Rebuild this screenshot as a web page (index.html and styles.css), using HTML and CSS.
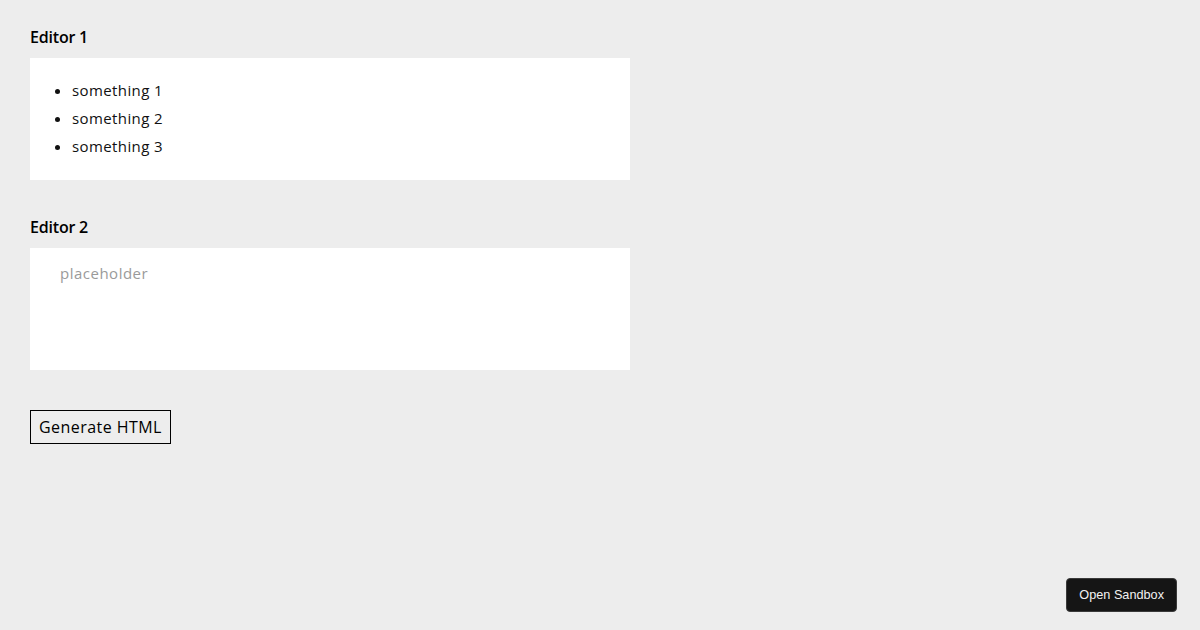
FILE: index.html
```html
<!DOCTYPE html>
<html>
<head>
<meta charset="utf-8">
<link rel="stylesheet" href="styles.css">
</head>
<body>
<div class="page">
  <h3 class="label">Editor 1</h3>
  <div class="editor">
    <ul class="list">
      <li>something 1</li>
      <li>something 2</li>
      <li>something 3</li>
    </ul>
  </div>
  <h3 class="label label-second">Editor 2</h3>
  <div class="editor editor-empty">
    <p class="placeholder">placeholder</p>
  </div>
  <button class="generate">Generate HTML</button>
</div>
<a class="sandbox">Open Sandbox</a>
</body>
</html>
```
FILE: styles.css
```css
html, body {
  margin: 0;
  background: #ededed;
}
body {
  font-family: "Open Sans", "DejaVu Sans", sans-serif;
  color: #111;
}
.page {
  padding: 25px 30px;
  width: 600px;
}
.label {
  margin: 0 0 9px;
  font-size: 16px;
  line-height: 24px;
  font-weight: 600;
  letter-spacing: -0.2px;
  color: #000;
}
.label-second {
  margin-top: 35px;
}
.editor {
  background: #fff;
  height: 122px;
  box-sizing: border-box;
  padding: 18px 0 0;
}
.list {
  margin: 0;
  padding-left: 42px;
  font-size: 15px;
  line-height: 28px;
  letter-spacing: 0.4px;
}
.editor-empty {
  padding: 11px 30px;
}
.placeholder {
  margin: 0;
  font-size: 15px;
  line-height: 28px;
  letter-spacing: 0.5px;
  color: #9a9a9a;
}
.generate {
  margin-top: 40px;
  height: 34px;
  box-sizing: border-box;
  padding: 0 8px;
  border: 1px solid #000;
  background: transparent;
  font-family: inherit;
  font-size: 16px;
  letter-spacing: 0.45px;
  color: #000;
  display: block;
}
.sandbox {
  position: fixed;
  right: 23px;
  bottom: 18px;
  height: 34px;
  box-sizing: border-box;
  padding: 0 12px;
  display: flex;
  align-items: center;
  background: #151515;
  border: 1px solid #3a3a3a;
  border-radius: 4px;
  color: #f2f2f2;
  font-family: "Liberation Sans", Arial, sans-serif;
  font-size: 12.7px;
}
```
